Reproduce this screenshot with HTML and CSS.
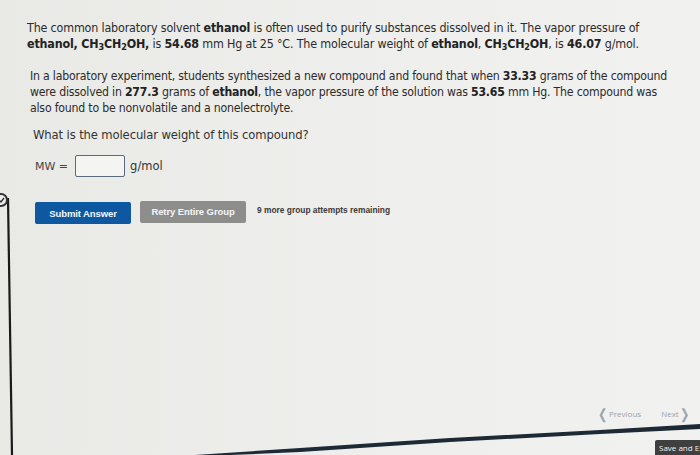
FILE: index.html
```html
<!DOCTYPE html>
<html>
<head>
<meta charset="utf-8">
<link rel="stylesheet" href="styles.css">
</head>
<body>
<div class="page">
  <div class="content">
    <p class="para p1">The common laboratory solvent <b>ethanol</b> is often used to purify substances dissolved in it. The vapor pressure of <b>ethanol, CH<sub>3</sub>CH<sub>2</sub>OH,</b> is <b>54.68</b> mm Hg at 25 °C. The molecular weight of <b>ethanol</b>, <b>CH<sub>3</sub>CH<sub>2</sub>OH</b>, is <b>46.07</b> g/mol.</p>
    <p class="para p2">In a laboratory experiment, students synthesized a new compound and found that when <b>33.33</b> grams of the compound were dissolved in <b>277.3</b> grams of <b>ethanol</b>, the vapor pressure of the solution was <b>53.65</b> mm Hg. The compound was also found to be nonvolatile and a nonelectrolyte.</p>
    <p class="question">What is the molecular weight of this compound?</p>
    <div class="answer-row">
      <span class="label">MW =</span>
      <span class="input"></span>
      <span class="unit">g/mol</span>
    </div>
    <div class="buttons">
      <span class="btn btn-submit">Submit Answer</span>
      <span class="btn btn-retry">Retry Entire Group</span>
      <span class="attempts">9 more group attempts remaining</span>
    </div>
  </div>
  <div class="nav">
    <span class="nav-link"><span class="chev">❮</span>Previous</span>
    <span class="nav-link">Next<span class="chev">❯</span></span>
  </div>
  <svg class="overlay" width="700" height="455" viewBox="0 0 700 455">
    <path d="M195 455 L300 448 L450 438 L600 430 L700 424 L700 429 L600 434 L450 442 L300 452 L230 455 Z" fill="#1d2a36"/>
    <path d="M8 198 L12 455" stroke="#1a1a1a" stroke-width="2.2"/>
    <circle cx="1" cy="200" r="6" fill="#eeeeee" stroke="#333" stroke-width="2"/>
    <path d="M-2 199 l3 3 l3 -4" stroke="#333" stroke-width="1.4" fill="none"/>
  </svg>
  <div class="save"><span>Save and Exit</span></div>
</div>
</body>
</html>
```
FILE: styles.css
```css
html, body {
  margin: 0;
  padding: 0;
}
body {
  width: 700px;
  height: 455px;
  overflow: hidden;
  background: linear-gradient(90deg, #e9e9e6 0%, #eeeeec 50%, #f1f1ef 100%);
  font-family: "DejaVu Sans Condensed", "DejaVu Sans", sans-serif;
  color: #2b2b2b;
}
.page {
  position: relative;
  width: 700px;
  height: 455px;
}
.content {
  padding: 20px 0 0 27px;
}
.para {
  margin: 0;
  font-size: 12.4px;
  line-height: 16px;
  letter-spacing: -0.17px;
  width: 650px;
}
.para b {
  font-weight: bold;
  color: #222;
}
sub {
  font-size: 9px;
  line-height: 0;
  vertical-align: -2px;
}
.p2 {
  width: 640px;
  margin-top: 16px;
  padding-left: 3px;
  font-size: 12.2px;
  line-height: 16px;
  letter-spacing: -0.2px;
}
.question {
  margin: 12px 0 0 6px;
  font-family: "DejaVu Sans", sans-serif;
  font-size: 11.6px;
  letter-spacing: -0.12px;
  color: #333;
}
.answer-row {
  display: flex;
  align-items: center;
  margin: 13px 0 0 8px;
  font-family: "DejaVu Sans", sans-serif;
  font-size: 11.5px;
  color: #333;
}
.label {
  font-size: 11px;
  color: #444;
}
.input {
  width: 48px;
  height: 20px;
  margin-left: 7px;
  border: 1px solid #5a6a7e;
  border-radius: 2px;
  background: #f4f4f3;
}
.unit {
  margin-left: 5px;
}
.buttons {
  display: flex;
  align-items: center;
  margin: 25px 0 0 8px;
  font-family: "Liberation Sans", Arial, sans-serif;
  font-weight: bold;
}
.btn {
  display: flex;
  align-items: center;
  justify-content: center;
  height: 22px;
  border-radius: 2px;
  color: #f4f6fa;
  font-size: 9.5px;
  letter-spacing: -0.1px;
}
.btn-submit {
  width: 96px;
  background: #0d58a0;
}
.btn-retry {
  width: 106px;
  margin-left: 9px;
  background: #8d8d8c;
  margin-top: -3px;
}
.attempts {
  margin-left: 11px;
  margin-top: -6px;
  font-size: 8.4px;
  color: #3a3a3a;
}
.nav {
  position: absolute;
  top: 404px;
  left: 597px;
  display: flex;
  gap: 20px;
  font-family: "Open Sans", sans-serif;
  font-size: 8px;
  color: #9aa3ad;
}
.nav-link {
  display: flex;
  align-items: center;
}
.chev {
  font-size: 14px;
  color: #9aa5b0;
  transform: scaleX(0.8);
}
.overlay {
  position: absolute;
  left: 0;
  top: 0;
}
.save {
  position: absolute;
  left: 655px;
  top: 440px;
  width: 45px;
  height: 15px;
  overflow: hidden;
  background: #3f3f3f;
  border-radius: 2px 0 0 0;
}
.save span {
  display: block;
  padding: 3px 0 0 4px;
  color: #f3f3f3;
  font-family: "Open Sans", sans-serif;
  font-size: 8px;
  line-height: 10px;
  white-space: nowrap;
}
```
